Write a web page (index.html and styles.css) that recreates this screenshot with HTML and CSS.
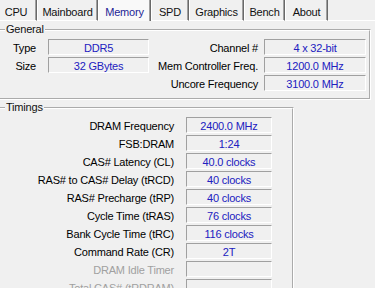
FILE: index.html
```html
<!DOCTYPE html>
<html lang="en">
<head>
    <meta charset="UTF-8">
    <meta name="viewport" content="width=device-width, initial-scale=1.0">
    <title>CPU-Z Memory</title>
    <link rel="stylesheet" href="styles.css">
</head>
<body>
<ul class="tabs">
    <li class="tab tab-cpu">CPU</li>
    <li class="tab tab-mainboard">Mainboard</li>
    <li class="tab tab-memory active">Memory</li>
    <li class="tab tab-spd">SPD</li>
    <li class="tab tab-graphics">Graphics</li>
    <li class="tab tab-bench">Bench</li>
    <li class="tab tab-about">About</li>
    <li class="tab-fill"></li>
</ul>

<fieldset class="group general">
    <legend>General</legend>
    <div class="general-grid">
        <span class="label">Type</span>
        <span class="field">DDR5</span>
        <span class="label">Channel #</span>
        <span class="field">4 x 32-bit</span>

        <span class="label">Size</span>
        <span class="field">32 GBytes</span>
        <span class="label">Mem Controller Freq.</span>
        <span class="field">1200.0 MHz</span>

        <span></span>
        <span></span>
        <span class="label">Uncore Frequency</span>
        <span class="field">3100.0 MHz</span>
    </div>
</fieldset>

<fieldset class="group timings">
    <legend>Timings</legend>
    <div class="timings-grid">
        <span class="label">DRAM Frequency</span>
        <span class="field">2400.0 MHz</span>
        <span class="label">FSB:DRAM</span>
        <span class="field">1:24</span>
        <span class="label">CAS# Latency (CL)</span>
        <span class="field">40.0 clocks</span>
        <span class="label">RAS# to CAS# Delay (tRCD)</span>
        <span class="field">40 clocks</span>
        <span class="label">RAS# Precharge (tRP)</span>
        <span class="field">40 clocks</span>
        <span class="label">Cycle Time (tRAS)</span>
        <span class="field">76 clocks</span>
        <span class="label">Bank Cycle Time (tRC)</span>
        <span class="field">116 clocks</span>
        <span class="label">Command Rate (CR)</span>
        <span class="field">2T</span>
        <span class="label disabled">DRAM Idle Timer</span>
        <span class="field"></span>
        <span class="label disabled">Total CAS# (tRDRAM)</span>
        <span class="field"></span>
    </div>
</fieldset>
</body>
</html>
```

FILE: styles.css
```css
body {
    margin: 0;
    width: 375px;
    height: 288px;
    overflow: hidden;
    background-color: #f0f0f0;
    color: #000;
    font-family: 'Liberation Sans', Arial, sans-serif;
    font-size: 11px;
    letter-spacing: -0.2px;
}

/* tab strip */
.tabs {
    display: flex;
    margin: 0 0 0 -5px;
    padding: 0;
    list-style-type: none;
}

.tab {
    box-sizing: border-box;
    height: 21px;
    padding-top: 4px;
    line-height: 16px;
    text-align: center;
    white-space: nowrap;
    color: #111;
    border-left: 1px solid #fff;
    border-right: 1px solid #696969;
    border-bottom: 1px solid #fff;
    box-shadow: inset -1px 0 0 #a0a0a0;
}

.tab.active {
    border-bottom: none;
    background-color: #f9f9f9;
    color: #1e1e96;
}

.tab-fill {
    flex: 1;
    border-bottom: 1px solid #fff;
}

.tab-cpu { width: 42px; }
.tab-mainboard { width: 61px; }
.tab-memory { width: 53px; }
.tab-spd { width: 38px; }
.tab-graphics { width: 55px; }
.tab-bench { width: 41px; }
.tab-about { width: 43px; }

/* group boxes */
.group {
    min-width: 0;
    margin: 0 0 0 -2px;
    border: 2px groove #fff;
}

.group legend {
    margin-left: 5px;
    padding: 0 1px;
    line-height: 13px;
    color: #111;
}

.general {
    width: 373px;
    box-sizing: border-box;
    margin-top: 2px;
    padding: 3px 3px 7px 0;
}

.timings {
    width: 296px;
    box-sizing: border-box;
    margin-top: 1px;
    padding: 3px 20px 0 0;
}

.general-grid {
    display: grid;
    grid-template-columns: 48px 101px 115px 102px;
    grid-auto-rows: 16px;
    row-gap: 2px;
}

.general-grid > :nth-child(4n+1) {
    padding-right: 12px;
}

.general-grid > :nth-child(4n+3) {
    padding-right: 6px;
}

.timings-grid {
    display: grid;
    grid-template-columns: 174px 86px;
    grid-auto-rows: 16px;
    column-gap: 12px;
    row-gap: 2px;
}

.label {
    text-align: right;
    line-height: 18px;
    white-space: nowrap;
}

.label.disabled {
    color: #a0a0a0;
}

.field {
    box-sizing: border-box;
    height: 16px;
    line-height: 16px;
    text-align: center;
    white-space: nowrap;
    color: #2020c0;
    border-top: 1px solid #a0a0a0;
    border-left: 1px solid #a0a0a0;
    border-right: 1px solid #fff;
    border-bottom: 1px solid #fff;
}
```
